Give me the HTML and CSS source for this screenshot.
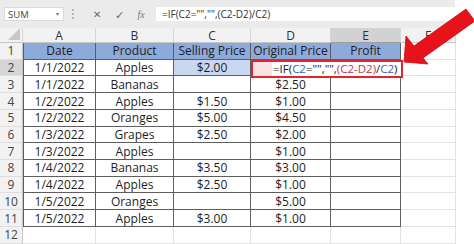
FILE: index.html
```html
<!DOCTYPE html>
<html lang="en">
<head>
    <meta charset="UTF-8">
    <title>Profit formula</title>
    <link rel="stylesheet" href="styles.css">
</head>
<body>
    <div class="app">
        <div class="toolbar">
            <div class="namebox">SUM <span class="drop">▾</span></div>
            <div class="grip"></div>
            <div class="tool-icon cancel">✕</div>
            <div class="tool-icon enter">✓</div>
            <div class="tool-icon fx">fx</div>
            <div class="formula-input">=IF(C2="","",(C2-D2)/C2)</div>
        </div>

        <div class="sheet">
            <div class="colhead corner"><span class="tri"></span></div>
            <div class="colhead">A</div>
            <div class="colhead">B</div>
            <div class="colhead">C</div>
            <div class="colhead">D</div>
            <div class="colhead active">E</div>
            <div class="colhead">F</div>
            <div class="colhead blank"></div>

            <div class="rowhead">1</div>
            <div class="cell t hd first">Date</div>
            <div class="cell t hd">Product</div>
            <div class="cell t hd">Selling Price</div>
            <div class="cell t hd">Original Price</div>
            <div class="cell t hd">Profit</div>
            <div class="cell g"></div>
            <div class="cell blank"></div>

            <div class="rowhead active">2</div>
            <div class="cell t first">1/1/2022</div>
            <div class="cell t">Apples</div>
            <div class="cell t sel">$2.00</div>
            <div class="cell t edit">
                <span class="edit-box">
                    <span class="edit-pad"></span>
                    <span class="edit-text">=IF(<span class="ref-c">C2</span>="","",<span class="ref-d">(C2-D2)</span>/<span class="ref-c">C2</span>)</span>
                </span>
            </div>
            <div class="cell t"></div>
            <div class="cell g"></div>
            <div class="cell blank"></div>

            <div class="rowhead">3</div>
            <div class="cell t first">1/1/2022</div>
            <div class="cell t">Bananas</div>
            <div class="cell t"></div>
            <div class="cell t">$2.50</div>
            <div class="cell t"></div>
            <div class="cell g"></div>
            <div class="cell blank"></div>

            <div class="rowhead">4</div>
            <div class="cell t first">1/2/2022</div>
            <div class="cell t">Apples</div>
            <div class="cell t">$1.50</div>
            <div class="cell t">$1.00</div>
            <div class="cell t"></div>
            <div class="cell g"></div>
            <div class="cell blank"></div>

            <div class="rowhead">5</div>
            <div class="cell t first">1/2/2022</div>
            <div class="cell t">Oranges</div>
            <div class="cell t">$5.00</div>
            <div class="cell t">$4.50</div>
            <div class="cell t"></div>
            <div class="cell g"></div>
            <div class="cell blank"></div>

            <div class="rowhead">6</div>
            <div class="cell t first">1/3/2022</div>
            <div class="cell t">Grapes</div>
            <div class="cell t">$2.50</div>
            <div class="cell t">$2.00</div>
            <div class="cell t"></div>
            <div class="cell g"></div>
            <div class="cell blank"></div>

            <div class="rowhead">7</div>
            <div class="cell t first">1/3/2022</div>
            <div class="cell t">Apples</div>
            <div class="cell t"></div>
            <div class="cell t">$1.00</div>
            <div class="cell t"></div>
            <div class="cell g"></div>
            <div class="cell blank"></div>

            <div class="rowhead">8</div>
            <div class="cell t first">1/4/2022</div>
            <div class="cell t">Bananas</div>
            <div class="cell t">$3.50</div>
            <div class="cell t">$3.00</div>
            <div class="cell t"></div>
            <div class="cell g"></div>
            <div class="cell blank"></div>

            <div class="rowhead">9</div>
            <div class="cell t first">1/4/2022</div>
            <div class="cell t">Apples</div>
            <div class="cell t">$2.50</div>
            <div class="cell t">$1.00</div>
            <div class="cell t"></div>
            <div class="cell g"></div>
            <div class="cell blank"></div>

            <div class="rowhead">10</div>
            <div class="cell t first">1/5/2022</div>
            <div class="cell t">Oranges</div>
            <div class="cell t"></div>
            <div class="cell t">$5.00</div>
            <div class="cell t"></div>
            <div class="cell g"></div>
            <div class="cell blank"></div>

            <div class="rowhead">11</div>
            <div class="cell t first">1/5/2022</div>
            <div class="cell t">Apples</div>
            <div class="cell t">$3.00</div>
            <div class="cell t">$1.00</div>
            <div class="cell t"></div>
            <div class="cell g"></div>
            <div class="cell blank"></div>

            <div class="rowhead">12</div>
            <div class="cell g"></div>
            <div class="cell g"></div>
            <div class="cell g"></div>
            <div class="cell g"></div>
            <div class="cell g"></div>
            <div class="cell g"></div>
            <div class="cell blank"></div>
        </div>

        <!-- red callout arrow pointing at the edited cell -->
        <svg class="arrow" width="474" height="244" viewBox="0 0 474 244">
            <polygon points="404,62 406,36 414,46 466,9 475,21 423,58 428,64" fill="#e8121b" stroke="#c50d14" stroke-width="0.8"/>
        </svg>
    </div>
</body>
</html>
```

FILE: styles.css
```css
body {
    margin: 0;
    background: #ffffff;
    font-family: "Open Sans", "Liberation Sans", sans-serif;
}

.app {
    position: relative;
    width: 474px;
    height: 244px;
    overflow: hidden;
    background: #ffffff;
}

/* formula bar */
.toolbar {
    width: 455px;
    height: 28px;
    box-sizing: border-box;
    padding: 7px 0 7px 4px;
    background: #ebebeb;
    display: flex;
    align-items: stretch;
}

.namebox {
    width: 60px;
    box-sizing: border-box;
    background: #ffffff;
    border: 1px solid #dcdcdc;
    font-size: 9.5px;
    color: #444;
    padding-left: 3px;
    display: flex;
    align-items: center;
    justify-content: space-between;
}

.namebox .drop {
    font-size: 6px;
    color: #777;
    padding-right: 4px;
}

.grip {
    width: 2px;
    margin: 2px 10px 2px 8px;
    border-left: 2px dotted #b8b8b8;
}

.tool-icon {
    width: 22px;
    display: flex;
    align-items: center;
    justify-content: center;
    color: #6a6a6a;
    font-size: 11px;
}

.tool-icon.cancel {
    font-size: 10px;
}

.tool-icon.fx {
    font-family: "Liberation Serif", serif;
    font-style: italic;
    font-size: 10px;
    color: #777;
}

.formula-input {
    flex: 1;
    margin-left: 4px;
    background: #ffffff;
    font-size: 10px;
    color: #333;
    padding-left: 6px;
    display: flex;
    align-items: center;
}

/* grid */
.sheet {
    display: grid;
    grid-template-columns: 23px 73px 78px 77px 80px 70px 55px 18px;
    grid-template-rows: 15px repeat(12, 16.72px);
    font-size: 12px;
    color: #1e1e1e;
}

.colhead {
    background: #f2f2f2;
    border-right: 1px solid #d6d6d6;
    border-bottom: 1px solid #c6c6c6;
    box-sizing: border-box;
    display: flex;
    align-items: center;
    justify-content: center;
    color: #333;
    font-size: 12px;
}

.colhead.active {
    background: #d2d2d2;
    border-bottom: 1px solid #9e9e9e;
}

.colhead.blank {
    background: #ffffff;
    border: none;
}

.corner {
    position: relative;
}

.tri {
    position: absolute;
    right: 2px;
    bottom: 2px;
    width: 0;
    height: 0;
    border-left: 12px solid transparent;
    border-bottom: 12px solid #c8c8c8;
}

.rowhead {
    background: #f2f2f2;
    border-right: 1px solid #c6c6c6;
    border-bottom: 1px solid #dedede;
    box-sizing: border-box;
    display: flex;
    align-items: center;
    justify-content: center;
    color: #444;
}

.rowhead.active {
    background: #d6d6d6;
}

.cell {
    box-sizing: border-box;
    display: flex;
    align-items: center;
    justify-content: center;
    white-space: nowrap;
}

.cell.t {
    border-right: 1px solid #5e5e5e;
    border-bottom: 1px solid #5e5e5e;
}

.cell.first {
    border-left: 1px solid #5e5e5e;
}

.cell.hd {
    background: #8eaadb;
}

.cell.sel {
    background: #c9d8f0;
}

.cell.g {
    border-right: 1px solid #e3e3e3;
    border-bottom: 1px solid #e3e3e3;
}

.cell.blank {
    background: #ffffff;
}

/* cell being edited: the formula spills over D2 and E2 */
.cell.edit {
    position: relative;
    overflow: visible;
    z-index: 2;
}

.edit-box {
    position: absolute;
    left: 0;
    top: 0;
    width: 152px;
    height: 18px;
    box-sizing: border-box;
    border: 2px solid #e3242b;
    background: #ffffff;
    display: flex;
    align-items: center;
}

.edit-pad {
    width: 19px;
    align-self: stretch;
    background: #fbe3e3;
}

.edit-text {
    padding-left: 1px;
    color: #222;
    font-size: 11.5px;
}

.ref-c {
    color: #3566c0;
}

.ref-d {
    color: #b23a5a;
}

.arrow {
    position: absolute;
    left: 0;
    top: 0;
    pointer-events: none;
    z-index: 5;
}
```
